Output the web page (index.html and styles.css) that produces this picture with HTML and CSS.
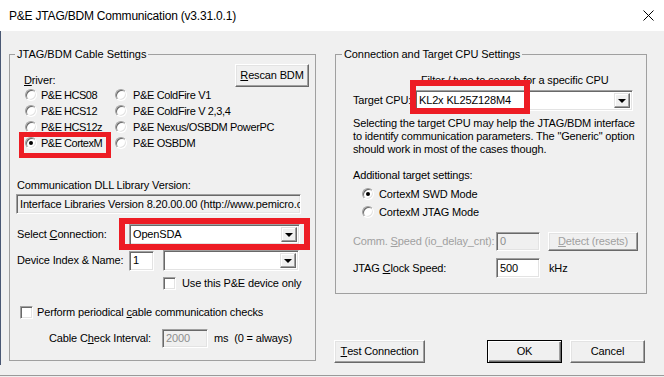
FILE: index.html
```html
<!DOCTYPE html>
<html>
<head>
<meta charset="utf-8">
<link rel="stylesheet" href="styles.css">
</head>
<body>
<div class="window">
  <div class="titlebar">
    <span class="title">P&amp;E JTAG/BDM Communication (v3.31.0.1)</span>
    <svg class="close" width="11" height="11" viewBox="0 0 11 11"><path d="M0.5 0.5 L10.5 10.5 M10.5 0.5 L0.5 10.5" stroke="#000" stroke-width="1"/></svg>
  </div>
  <div class="client">
    <fieldset class="group group-left">
      <legend>JTAG/BDM Cable Settings</legend>
      <div class="driver-head">
        <span class="txt"><u>D</u>river:</span>
        <div class="btn rescan"><u>R</u>escan BDM</div>
      </div>
      <div class="radio-grid">
        <div class="ritem"><span class="radio"></span><span>P&amp;E HCS08</span></div>
        <div class="ritem"><span class="radio"></span><span>P&amp;E ColdFire V1</span></div>
        <div class="ritem"><span class="radio"></span><span>P&amp;E HCS12</span></div>
        <div class="ritem"><span class="radio"></span><span>P&amp;E ColdFire V 2,3,4</span></div>
        <div class="ritem"><span class="radio"></span><span>P&amp;E HCS12z</span></div>
        <div class="ritem"><span class="radio"></span><span>P&amp;E Nexus/OSBDM PowerPC</span></div>
        <div class="ritem"><span class="radio checked"></span><span>P&amp;E CortexM</span></div>
        <div class="ritem"><span class="radio"></span><span>P&amp;E OSBDM</span></div>
      </div>
      <div class="txt dll-label">Communication DLL Library Version:</div>
      <div class="edit readonly dll-edit">Interface Libraries Version 8.20.00.00 (http://www.pemicro.com)</div>
      <div class="form-row conn-row">
        <span class="txt">Select <u>C</u>onnection:</span>
        <div class="combo conn-combo"><span class="combo-text">OpenSDA</span><span class="drop"><i></i></span></div>
      </div>
      <div class="form-row dev-row">
        <span class="txt">Device Index &amp; Name:</span>
        <div class="edit dev-index">1</div>
        <div class="combo dev-combo"><span class="combo-text"></span><span class="drop"><i></i></span></div>
      </div>
      <div class="check-row use-only">
        <span class="check"></span><span class="txt">Use this P&amp;E device only</span>
      </div>
      <div class="check-row perform">
        <span class="check"></span><span class="txt">Perform periodical <u>c</u>able communication checks</span>
      </div>
      <div class="form-row interval-row">
        <span class="txt">Cable C<u>h</u>eck Interval:</span>
        <div class="edit disabled interval-edit">2000</div>
        <span class="txt unit">ms&nbsp; (0 = always)</span>
      </div>
    </fieldset>

    <div class="right-col">
      <fieldset class="group group-right">
        <legend>Connection and Target CPU Settings</legend>
        <div class="txt filter">Filter / type to search for a specific CPU</div>
        <div class="form-row cpu-row">
          <span class="txt">Target CPU:</span>
          <div class="combo cpu-combo"><span class="combo-text">KL2x KL25Z128M4</span><span class="drop"><i></i></span></div>
        </div>
        <div class="txt desc">Selecting the target CPU may help the JTAG/BDM interface<br>to identify communication parameters. The "Generic" option<br>should work in most of the cases though.</div>
        <div class="txt additional">Additional target settings:</div>
        <div class="mode-list">
          <div class="ritem"><span class="radio checked"></span><span>CortexM SWD Mode</span></div>
          <div class="ritem"><span class="radio"></span><span>CortexM JTAG Mode</span></div>
        </div>
        <div class="form-row comm-row">
          <span class="txt grey">Comm. <u>S</u>peed (io_delay_cnt):</span>
          <div class="edit disabled small-edit">0</div>
          <div class="btn btn-disabled detect"><u>D</u>etect (resets)</div>
        </div>
        <div class="form-row clock-row">
          <span class="txt">JTAG <u>C</u>lock Speed:</span>
          <div class="edit small-edit tall">500</div>
          <span class="txt khz">kHz</span>
        </div>
      </fieldset>
      <div class="button-row">
        <div class="btn test"><u>T</u>est Connection</div>
        <div class="btn btn-default ok">OK</div>
        <div class="btn cancel">Cancel</div>
      </div>
    </div>
  </div>

  <span class="mark mark-cortex"></span>
  <span class="mark mark-conn"></span>
  <span class="mark mark-cpu"></span>
</div>
</body>
</html>
```

FILE: styles.css
```css
* { box-sizing: border-box; }

html, body {
  margin: 0;
  padding: 0;
}

body {
  width: 664px;
  height: 377px;
  overflow: hidden;
  background: #f0f0f0;
  font-family: "Liberation Sans", Arial, sans-serif;
  font-size: 11px;
  letter-spacing: -0.15px;
  color: #000;
}

.window {
  position: relative;
  width: 664px;
  height: 376px;
  background: #f0f0f0;
  border-bottom: 1px solid #9a9a9a;
}

.titlebar {
  height: 31px;
  background: #fff;
  display: flex;
  align-items: center;
  justify-content: space-between;
  padding: 0 10px 0 9px;
}

.title {
  font-family: "Liberation Sans", Arial, sans-serif;
  font-size: 12px;
  letter-spacing: -0.2px;
  color: #000;
  margin-top: 1px;
}

.close {
  display: block;
}

.client {
  display: flex;
  padding: 16px 0 2px 9px;
  box-shadow: inset 1px 0 0 #4a5874;
}

u { text-decoration: underline; text-underline-offset: 1px; }

.txt {
  line-height: 13px;
  white-space: nowrap;
}

.grey { color: #a0a0a0; }

/* group boxes */
.group {
  margin: 0;
  padding: 0;
  min-width: 0;
  border: 1px solid #a0a0a0;
  border-radius: 0;
}

.group legend {
  font-size: 11px;
  line-height: 14px;
  padding: 0 2px;
  margin-left: 5px;
  white-space: nowrap;
  letter-spacing: 0;
}

.group-left {
  width: 307px;
  height: 314px;
}

.right-col {
  margin-left: 19px;
  width: 312px;
}

.group-right {
  width: 312px;
  height: 247px;
}

.group-right legend { margin-left: 6px; letter-spacing: -0.1px; }

/* controls */
.btn {
  display: flex;
  align-items: center;
  justify-content: center;
  height: 23px;
  background: #f0f0f0;
  border: 1px solid;
  border-color: #fff #696969 #696969 #fff;
  box-shadow: inset -1px -1px #a0a0a0, inset 1px 1px #e3e3e3;
  white-space: nowrap;
  line-height: 13px;
}

.btn-default {
  border: 1px solid #000;
  box-shadow: inset 1px 1px #fff, inset -1px -1px #696969, inset -2px -2px #a0a0a0;
}

.btn-disabled {
  color: #a0a0a0;
}

.edit {
  height: 20px;
  background: #fff;
  border: 1px solid;
  border-color: #a0a0a0 #fff #fff #a0a0a0;
  box-shadow: inset 1px 1px #696969, inset -1px -1px #e3e3e3;
  padding: 0 0 0 3px;
  display: flex;
  align-items: center;
  white-space: nowrap;
  overflow: hidden;
  line-height: 13px;
}

.edit.readonly { background: #f0f0f0; }
.edit.disabled { background: #f0f0f0; color: #8d8d8d; }

.combo {
  height: 21px;
  background: #fff;
  border: 1px solid;
  border-color: #a0a0a0 #fff #fff #a0a0a0;
  box-shadow: inset 1px 1px #696969, inset -1px -1px #e3e3e3;
  display: flex;
  align-items: stretch;
  padding: 2px;
}

.combo-text {
  flex: 1;
  display: flex;
  align-items: center;
  padding-left: 1px;
  line-height: 13px;
  white-space: nowrap;
  overflow: hidden;
}

.drop {
  width: 16px;
  background: #f0f0f0;
  border: 1px solid;
  border-color: #e3e3e3 #696969 #696969 #e3e3e3;
  box-shadow: inset -1px -1px #a0a0a0, inset 1px 1px #fff;
  display: flex;
  align-items: center;
  justify-content: center;
}

.drop i {
  width: 0;
  height: 0;
  border-left: 4px solid transparent;
  border-right: 4px solid transparent;
  border-top: 4px solid #000;
  margin-top: 1px;
}

.radio {
  position: relative;
  flex: none;
  width: 12px;
  height: 12px;
  border-radius: 50%;
  background: #fff;
  border: 1px solid;
  border-color: #a0a0a0 #fff #fff #a0a0a0;
  box-shadow: inset 1px 1px #696969, inset -1px -1px #e3e3e3;
}

.radio.checked::after {
  content: "";
  position: absolute;
  left: 3px;
  top: 3px;
  width: 4px;
  height: 4px;
  border-radius: 50%;
  background: #000;
}

.check {
  flex: none;
  width: 13px;
  height: 13px;
  background: #fff;
  border: 1px solid;
  border-color: #a0a0a0 #fff #fff #a0a0a0;
  box-shadow: inset 1px 1px #696969, inset -1px -1px #e3e3e3;
}

.ritem {
  display: flex;
  align-items: center;
  gap: 5px;
  line-height: 13px;
  white-space: nowrap;
}

/* left group layout */
.driver-head {
  display: flex;
  align-items: flex-end;
  justify-content: space-between;
  margin: 3px 6px 0 14px;
}

.rescan { width: 74px; }

.radio-grid {
  display: grid;
  grid-template-columns: 90px auto;
  grid-auto-rows: 16px;
  margin-left: 15px;
  letter-spacing: -0.5px;
}

.radio-grid .ritem:nth-child(odd) { gap: 4px; }
.radio-grid .ritem:nth-child(even) { gap: 6px; letter-spacing: -0.35px; }

.dll-label {
  margin: 28px 0 0 7px;
}

.dll-edit {
  margin: 2px 0 0 6px;
  width: 285px;
}

.form-row {
  display: flex;
  align-items: center;
}

.conn-row {
  margin: 10px 0 0 7px;
}

.conn-row .txt { width: 112px; }
.conn-combo { width: 171px; }

.dev-row {
  margin: 5px 0 0 7px;
}

.dev-row .txt { width: 112px; }
.dev-index { width: 25px; }
.dev-combo { width: 136px; margin-left: 9px; }

.check-row {
  display: flex;
  align-items: center;
}

.use-only {
  margin: 6px 0 0 153px;
  gap: 6px;
}

.perform {
  margin: 16px 0 0 10px;
  gap: 4px;
}

.interval-row {
  margin: 10px 0 0 39px;
}

.interval-row .txt:first-child { width: 113px; }
.interval-edit { width: 46px; height: 19px; }
.unit { margin-left: 6px; }

/* right group layout */
.filter {
  margin: 13px 0 0 85px;
}

.cpu-row {
  margin: 3px 0 0 17px;
}

.cpu-row .txt { width: 62px; }
.cpu-combo { width: 218px; }

.desc {
  margin: 6px 0 0 17px;
}

.additional {
  margin: 13px 0 0 17px;
}

.mode-list {
  margin: 3px 0 0 26px;
  display: grid;
  grid-auto-rows: 18px;
}

.comm-row {
  margin: 11px 0 0 17px;
}

.comm-row .txt { width: 143px; }
.small-edit { width: 44px; height: 19px; }
.small-edit.tall { height: 20px; }
.detect { width: 90px; height: 19px; margin-left: 8px; }

.clock-row {
  margin: 7px 0 0 17px;
}

.clock-row .txt:first-child { width: 143px; }
.khz { margin-left: 9px; }

.button-row {
  display: flex;
  margin: 46px 0 0 -1px;
}

.test { width: 91px; }
.ok { width: 75px; margin-left: 62px; }
.cancel { width: 75px; margin-left: 8px; }

/* red annotation boxes drawn over the dialog */
.mark {
  position: absolute;
  border: 6px solid #ed1c24;
  pointer-events: none;
}

.mark-cortex { left: 19px; top: 132px; width: 92px; height: 26px; border-width: 5px; }
.mark-conn { left: 119px; top: 218px; width: 191px; height: 32px; }
.mark-cpu { left: 410px; top: 80px; width: 120px; height: 34px; }
```
